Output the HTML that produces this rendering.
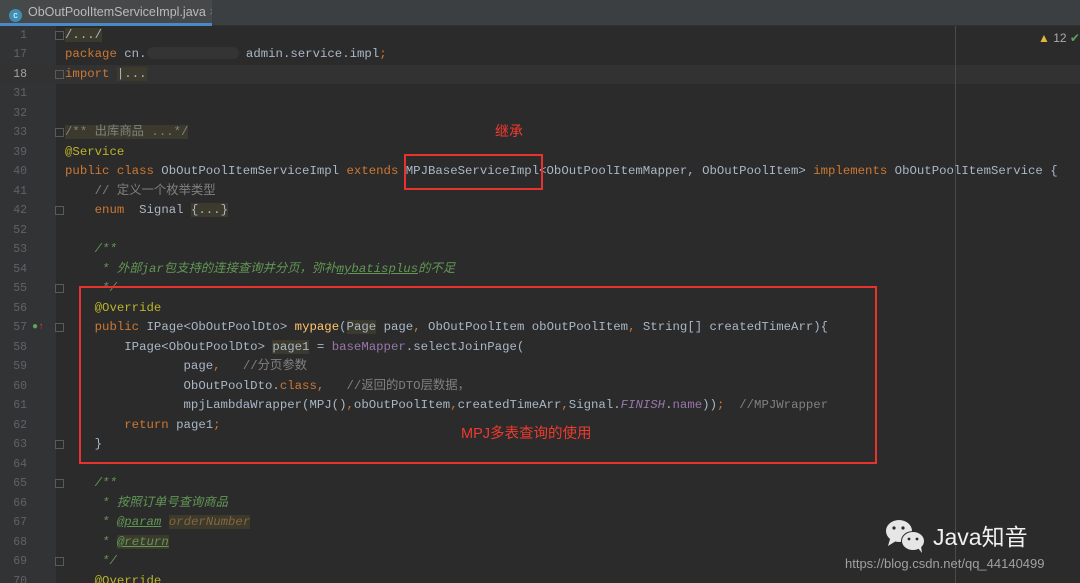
<!DOCTYPE html>
<html><head><meta charset="utf-8"><style>
html,body{margin:0;width:1080px;height:583px;overflow:hidden}
body{background:#2b2b2b;position:relative;font-family:"Liberation Mono","Noto Sans CJK SC",monospace;font-size:12.35px;color:#a9b7c6}
.tabbar{position:absolute;left:0;top:0;width:1080px;height:25px;background:#3c3f41;border-bottom:1px solid #323232}
.tab{position:absolute;left:0;top:0;width:212px;height:23px;border-bottom:3px solid #4a88c7;background:#45494a;font-family:"Liberation Sans",sans-serif;font-size:12.5px;color:#bbb;line-height:24px;white-space:nowrap;overflow:hidden}
.gut{position:absolute;left:0;top:26px;width:56px;height:557px;background:#313335}
.cur{position:absolute;left:0;top:65px;width:1080px;height:19px;background:#323232}
.ln{position:absolute;left:0;width:27px;text-align:right;color:#606366;font-size:11.5px;line-height:19.5px}
.l{position:absolute;left:65px;white-space:pre;line-height:19.5px}
.k{color:#cc7832}.a{color:#bbb529}.c{color:#808080}.d{color:#629755;font-style:italic}.p{color:#9876aa}.h{background:#3b3a2c}
.f{position:absolute;left:55px;width:7px;height:7px;border:1px solid #5a5a5a}
.red{position:absolute;border:2px solid #e8322e}
.rt{position:absolute;color:#f03a2e;font-family:"Liberation Sans","Noto Sans CJK SC",sans-serif}
</style></head><body>
<div class="tabbar"><div class="tab"><span style="display:inline-block;width:13px;height:13px;border-radius:50%;background:#3f8fb5;color:#fff;font-size:9px;line-height:13px;text-align:center;margin:0 6px 0 9px;vertical-align:-2px">c</span>ObOutPoolItemServiceImpl.java <span style="color:#777">×</span></div></div>
<div class="gut"></div>
<div class="cur"></div>
<div style="position:absolute;left:955px;top:26px;width:1px;height:557px;background:#4a4a4a"></div>
<div style="position:absolute;left:1038px;top:31px;font-family:'Liberation Sans',sans-serif;font-size:12px;color:#aaa"><span style="color:#e0b93a">▲</span> 12 <span style="color:#5fa35f">✔</span></div>

<div class="ln" style="top:26px">1</div><div class="ln" style="top:45px">17</div><div class="ln" style="top:65px;color:#a4a3a3">18</div><div class="ln" style="top:84px">31</div><div class="ln" style="top:104px">32</div><div class="ln" style="top:123px">33</div><div class="ln" style="top:143px">39</div><div class="ln" style="top:162px">40</div><div class="ln" style="top:182px">41</div><div class="ln" style="top:201px">42</div><div class="ln" style="top:221px">52</div><div class="ln" style="top:240px">53</div><div class="ln" style="top:260px">54</div><div class="ln" style="top:279px">55</div><div class="ln" style="top:299px">56</div><div class="ln" style="top:318px">57</div><div class="ln" style="top:338px">58</div><div class="ln" style="top:357px">59</div><div class="ln" style="top:377px">60</div><div class="ln" style="top:396px">61</div><div class="ln" style="top:416px">62</div><div class="ln" style="top:435px">63</div><div class="ln" style="top:455px">64</div><div class="ln" style="top:474px">65</div><div class="ln" style="top:494px">66</div><div class="ln" style="top:513px">67</div><div class="ln" style="top:533px">68</div><div class="ln" style="top:552px">69</div><div class="ln" style="top:572px">70</div>
<div style="position:absolute;left:32px;top:322px;color:#5fa35f;font-size:10px">●<span style="color:#e8322e">↑</span></div>

<div class="f" style="top:31px"></div><div class="f" style="top:70px"></div><div class="f" style="top:128px"></div><div class="f" style="top:206px"></div><div class="f" style="top:284px"></div><div class="f" style="top:323px"></div><div class="f" style="top:440px"></div><div class="f" style="top:479px"></div><div class="f" style="top:557px"></div>

<div class="l" style="top:26px"><span class="h">/.../</span></div>
<div class="l" style="top:45px"><span class="k">package</span> cn.<span style="display:inline-block;width:92px;height:12px;background:#343434;border-radius:6px;vertical-align:-2px"></span> admin.service.impl<span class="k">;</span></div>
<div class="l" style="top:65px"><span class="k">import</span> <span class="h">|...</span></div>
<div class="l" style="top:123px"><span class="h" style="color:#808080">/** 出库商品 ...*/</span></div>
<div class="l" style="top:143px"><span class="a">@Service</span></div>
<div class="l" style="top:162px"><span class="k">public class</span> ObOutPoolItemServiceImpl <span class="k">extends</span> MPJBaseServiceImpl&lt;ObOutPoolItemMapper, ObOutPoolItem&gt; <span class="k">implements</span> ObOutPoolItemService {</div>
<div class="l" style="top:182px">    <span class="c">// 定义一个枚举类型</span></div>
<div class="l" style="top:201px">    <span class="k">enum</span>  Signal <span class="h">{...}</span></div>
<div class="l" style="top:240px">    <span class="d">/**</span></div>
<div class="l" style="top:260px">     <span class="d">* 外部jar包支持的连接查询并分页，弥补<u>mybatisplus</u>的不足</span></div>
<div class="l" style="top:279px">     <span class="d">*/</span></div>
<div class="l" style="top:299px">    <span class="a">@Override</span></div>
<div class="l" style="top:318px">    <span class="k">public</span> IPage&lt;ObOutPoolDto&gt; <span style="color:#ffc66d">mypage</span>(<span class="h">Page</span> page<span class="k">,</span> ObOutPoolItem obOutPoolItem<span class="k">,</span> String[] createdTimeArr){</div>
<div class="l" style="top:338px">        IPage&lt;ObOutPoolDto&gt; <span class="h">page1</span> = <span class="p">baseMapper</span>.selectJoinPage(</div>
<div class="l" style="top:357px">                page<span class="k">,</span>   <span class="c">//分页参数</span></div>
<div class="l" style="top:377px">                ObOutPoolDto.<span class="k">class,</span>   <span class="c">//返回的DTO层数据，</span></div>
<div class="l" style="top:396px">                mpjLambdaWrapper(MPJ()<span class="k">,</span>obOutPoolItem<span class="k">,</span>createdTimeArr<span class="k">,</span>Signal.<i class="p">FINISH</i>.<span class="p">name</span>))<span class="k">;</span>  <span class="c">//MPJWrapper</span></div>
<div class="l" style="top:416px">        <span class="k">return</span> page1<span class="k">;</span></div>
<div class="l" style="top:435px">    }</div>
<div class="l" style="top:474px">    <span class="d">/**</span></div>
<div class="l" style="top:494px">     <span class="d">* 按照订单号查询商品</span></div>
<div class="l" style="top:513px">     <span class="d">* <u>@param</u> <span class="h" style="color:#8a653b">orderNumber</span></span></div>
<div class="l" style="top:533px">     <span class="d">* <u class="h">@return</u></span></div>
<div class="l" style="top:552px">     <span class="d">*/</span></div>
<div class="l" style="top:572px">    <span class="a">@Override</span></div>

<div class="red" style="left:404px;top:154px;width:135px;height:32px"></div>
<div class="red" style="left:79px;top:286px;width:794px;height:174px"></div>
<div class="rt" style="left:495px;top:121px;font-size:14px">继承</div>
<div class="rt" style="left:461px;top:422px;font-size:14.5px">MPJ多表查询的使用</div>

<svg style="position:absolute;left:884px;top:519px" width="44" height="36" viewBox="0 0 44 36"><ellipse cx="15" cy="12" rx="13" ry="11" fill="#e6e6e6"/><path d="M6 20 L4 27 L12 22Z" fill="#e6e6e6"/><ellipse cx="29" cy="22" rx="12" ry="10" fill="#2b2b2b"/><ellipse cx="29" cy="22" rx="11" ry="9" fill="#e6e6e6"/><path d="M34 29 L38 34 L37 27Z" fill="#e6e6e6"/><circle cx="10" cy="9" r="1.6" fill="#2b2b2b"/><circle cx="19" cy="9" r="1.6" fill="#2b2b2b"/><circle cx="25" cy="20" r="1.4" fill="#2b2b2b"/><circle cx="33" cy="20" r="1.4" fill="#2b2b2b"/></svg>
<div style="position:absolute;left:933px;top:518px;font-family:'Liberation Sans','Noto Sans CJK SC',sans-serif;font-size:23px;color:#f0f0f0">Java知音</div>
<div style="position:absolute;left:845px;top:556px;font-family:'Liberation Sans',sans-serif;font-size:13px;color:#a0a0a0">https://blog.csdn.net/qq_44140499</div>
</body></html>
